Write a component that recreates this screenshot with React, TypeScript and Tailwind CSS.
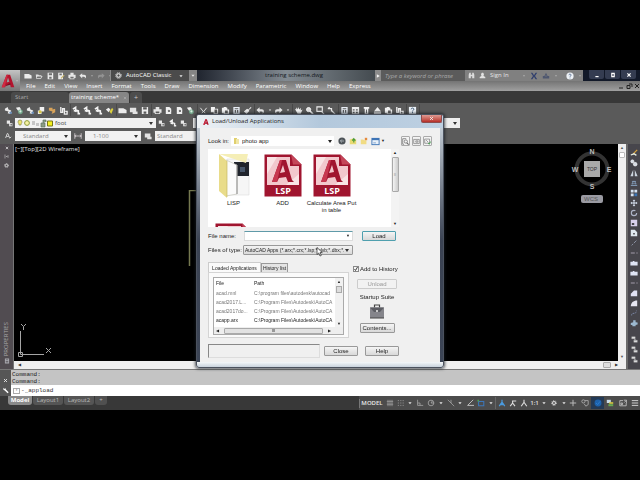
import { useState } from "react";
import type { ReactNode } from "react";
import clsx from "clsx";

const menus = [
  "File", "Edit", "View", "Insert", "Format", "Tools", "Draw",
  "Dimension", "Modify", "Parametric", "Window", "Help", "Express",
];

type Row = { file: string; path: string; active?: boolean };

const loadedApps: Row[] = [
  { file: "acad.mnl", path: "C:\\program files\\autodesk\\autocad" },
  { file: "acad2017.L...", path: "C:\\Program Files\\Autodesk\\AutoCA" },
  { file: "acad2017do...", path: "C:\\Program Files\\Autodesk\\AutoCA" },
  { file: "acapp.arx", path: "C:\\Program Files\\Autodesk\\AutoCA", active: true },
  { file: "", path: "C:\\Program Files\\Autodesk\\AutoCA", active: true },
];

// all glyphs are drawn on a 10x10 grid
const glyphs: Record<string, ReactNode> = {
  wide: <path d="M0.500 2.500h5.500l3.500 2V8h-9z" fill="#ececec" />,
  open: <path d="M1 3h3l1 1h3v1h1.500L7.500 8.500H1.500z M3 5.500l-1 2h5l1-2z" fill="#e0e0e0" fillRule="evenodd" />,
  save: <path d="M2 1h7v8H2z M3.500 1.500v2.500h4V1.500z M4 6v2.500h3V6z" fill="#ececec" fillRule="evenodd" />,
  saveAs: (
    <>
      <path d="M1.500 1h6v8h-6z M3 2v2h3V2z" fill="#ececec" fillRule="evenodd" />
      <path d="M5 8l4-4" stroke="#c8b56a" strokeWidth="1.500" />
    </>
  ),
  print: <path d="M3 1h4v2.500h2.500V7.500H8V9H2V7.500H0.500V3.500H3z M3 6v2h4V6z" fill="#e6e6e6" fillRule="evenodd" />,
  preview: (
    <>
      <path d="M2 1h4l2 2v6H2z" fill="#eee" />
      <circle cx="5.500" cy="5.500" r="2" fill="#777" stroke="#fff" />
    </>
  ),
  undo: <path d="M0.500 4.500L4 1.500v2h2.500c3 0 3 4 0.500 5 1-1.500 0.500-2.500-1-2.500H4v2z" fill="#e6e6e6" />,
  redo: <path d="M9.500 4.500L6 1.500v2H3.500c-3 0-3 4-0.500 5-1-1.500-0.500-2.500 1-2.500h2v2z" fill="#e6e6e6" />,
  caret: <path d="M3 4h4L5 6.500z" fill="#e8e8e8" />,
  play: <path d="M3 2v6l5-3z" fill="#f4f4f4" />,
  gear: (
    <g fill="none" stroke="#f0f0f0">
      <circle cx="5" cy="5" r="2.500" strokeWidth="1.500" />
      <circle cx="5" cy="5" r="4" strokeWidth="1.300" strokeDasharray="1.600 1.540" />
    </g>
  ),
  snapEnd: (
    <>
      <path d="M1 3l3-2 1 3 3 1-1 4-3-1 1-2-4-1z" fill="#ededed" />
      <circle cx="7.500" cy="7.500" r="1.500" fill="#6e8fb8" />
    </>
  ),
  snapGreen: (
    <>
      <path d="M1 2l4-1 2 3-3 2z" fill="#eee" />
      <circle cx="6" cy="6.500" r="2.700" fill="#74a78c" />
      <circle cx="6" cy="6" r="1.200" fill="#d9efe2" />
    </>
  ),
  snapYellow: (
    <>
      <path d="M3 1h5v5H5v3H1V5h2z" fill="#f0f0f0" />
      <circle cx="3.500" cy="6.500" r="1.800" fill="#d8c547" />
    </>
  ),
  orange: <path d="M1 2h4v2l3-1v4L4 9l1-3-4-1z" fill="#d8a35a" />,
  hooks: <path d="M2 1v6h2V3h2v6h3V6H7" stroke="#eee" strokeWidth="1.500" fill="none" />,
  chain: <path d="M1 3.500l3-2v3l3 1v3h2 M2 5l3 1" stroke="#f4f4f4" strokeWidth="1.800" fill="none" />,
  chainY: (
    <>
      <path d="M1 4l3-2 2 2-2 3z" fill="#f1f1f1" />
      <path d="M5 6l3-4 1 2-2 5z" fill="#ddd23d" />
    </>
  ),
  cut: <path d="M1.500 2L5 6.500 8.500 2 M3 8l2-2 2 2" stroke="#ececec" strokeWidth="1" fill="none" />,
  copy: <path d="M1 1h4.500v2H9v6H4V7H1z M5 4v4h3V4z" fill="#f2f2f2" fillRule="evenodd" />,
  paste: <path d="M1 2h2V1h3v1h1v2h2v5H3V8H1z M4.500 5v3h3V5z" fill="#f2f2f2" fillRule="evenodd" />,
  brush: <path d="M8.500 1L6 4 4.500 3 1 6l3 3 3-3.500-0.500-1L9.500 2z" fill="#ececec" />,
  hand: <path d="M2 5l-1-2 1.500 1V1.500L4 4l0.500-3L6 4l1.500-2v3l2-1-2 4.500H4z" fill="#f3f3f3" />,
  zoom: (
    <>
      <circle cx="4" cy="4" r="2.300" fill="#ddd" stroke="#fff" />
      <path d="M5.500 5.500L9 9" stroke="#fff" strokeWidth="1.700" />
    </>
  ),
  zoomWin: <path d="M1 1h6v5H1z M6 6l3 3" stroke="#f0f0f0" strokeWidth="1.200" fill="none" />,
  zoomPrev: <path d="M1 3h4v3 M1 3l2-1.500 M5 5l4 4" stroke="#e8e8e8" strokeWidth="1.400" fill="none" />,
  sheet: <path d="M1.500 1h7v8h-7z M3 2.500h4v1H3z M3 4.500h1.500v3H3z M5.500 4.500H7v3H5.500z" fill="#e8edf4" fillRule="evenodd" />,
  grid: <path d="M1 1h8v8H1z M2 3.500v1.500h2V3.500z M5.500 3.500V5h2V3.500z M2 6.500v1.500h2V6.500z M5.500 6.500v1.500h2V6.500z" fill="#ececec" fillRule="evenodd" />,
  tall: <path d="M2 1h6v2H7v6H3V3H2z M4.500 4v4h1V4z" fill="#f2f2f2" fillRule="evenodd" />,
  tri: <path d="M5 1l4 5H1z M1 7h8v2H1z" fill="#ececec" />,
  help: (
    <>
      <path d="M1 1h8v8H1z" fill="#eaf0f6" />
      <path d="M3.500 3.700c0-2 3.200-1.700 3 0C6.400 4.800 5 4.600 5 6 M5 6.800v1.200" stroke="#2f4966" fill="none" />
    </>
  ),
  layers: (
    <>
      <path d="M1 2h4v3h3v4H4V6H1z" fill="#e9e9e9" />
      <path d="M5.500 6h2v2h-2z" fill="#777" />
    </>
  ),
  dim: <path d="M1 1.500v7 M9 1.500v7 M1 5h8 M2.500 3.500L1 5l1.500 1.500 M7.500 3.500L9 5 7.500 6.500" stroke="#d8d0d4" fill="none" />,
  leader: <path d="M1 2h7v4h1.500v3H4V7H1z" fill="#e3e3e3" />,
  textA: <path d="M2 7.500L4 2h1l2 5.500 M3 5.500h3 M7 8l2-2" stroke="#e8e8e8" fill="none" />,
  cross: <path d="M2 2l6 6 M8 2L2 8" stroke="#eee" strokeWidth="1.700" fill="none" />,
  pin: <path d="M2 1v8 M4 5h2l2-2v4L6 5" stroke="#ddd" fill="none" />,
  wrench: <path d="M2 1v3l2 1 4 4 1.500-1.500-4-4L5 1.500 4 3z" fill="#fff" />,
  pencil: (
    <>
      <path d="M9 1L4 6" stroke="#d9a33b" strokeWidth="1.500" />
      <path d="M1 7.500l4-1.500 3 2" stroke="#e8efe2" strokeWidth="1.600" fill="none" />
    </>
  ),
  copies: (
    <g fill="#d6dce4" stroke="#fff" strokeWidth="0.700">
      <circle cx="3" cy="3" r="2" />
      <circle cx="6.500" cy="6.500" r="2.300" />
    </g>
  ),
  mirror: <path d="M4 1v8H0.500z M6 1v8h3.500z" fill="#ccd5df" />,
  offset: <path d="M1 8h8 M2 6h2c0-1-1-2-1-3h4c0 1-1 2-1 3h2" stroke="#8aa6c4" strokeWidth="1.200" fill="none" />,
  array: (
    <>
      <path d="M1 1h3.500v3.500H1z M5.500 1H9v3.500H5.500z M1 5.500h3.500V9H1z" fill="#d5e2f2" />
      <path d="M5.500 5.500H9V9H5.500z" fill="#3d75b5" />
    </>
  ),
  move: <path d="M5 0.500l1.700 2H5.600v1.900h1.900V3.300l2 1.700-2 1.700V5.600H5.600v1.900h1.100L5 9.500l-1.700-2h1.100V5.600H2.500v1.100L0.500 5l2-1.700v1.100h1.900V2.500H3.300z" fill="#dce6f5" />,
  rotate: <circle cx="5" cy="5" r="3.300" stroke="#aeb5c8" strokeWidth="1.400" strokeDasharray="17 4" fill="none" />,
  scale: <path d="M1 1h8v8H1z M2.300 5v2.500h3V5z" fill="#d9d1ec" fillRule="evenodd" />,
  stretch: <path d="M1 1h5l3 3v5H1z M4 5v2h2V5z" fill="#dfe8ef" fillRule="evenodd" />,
  slash: <path d="M2 8l2-2 M5 5l3-3" stroke="#8b92a4" strokeWidth="1.200" />,
  dash: <path d="M1 5h5 M8 5h1.500" stroke="#a6a0b0" strokeWidth="1.200" />,
  slab: <path d="M0.500 3.500h3V2.500h2v1h4V8h-9z" fill="#dfe4f4" />,
  chamfer: <path d="M1 9V6l4-4h4v7z" fill="#e0e1f3" />,
  fillet: <path d="M1 9c0-4 3-7 8-7v7z" fill="#e6e6f1" />,
  spline: <path d="M2 8c0-5 6 0 6-6" stroke="#7b89a8" strokeWidth="1.200" strokeDasharray="2 1" fill="none" />,
  explode: <path d="M1 5l3-1V1.500h3V4l2.500 0.500V7L7 7.500V9H3V7.500H1z" fill="#9cb9d0" />,
  stack: <path d="M1 1h5v3H1z M5 3.500v2h2 M4 6h5v3H4z" fill="#dedede" stroke="#aaa" strokeWidth="0.500" />,
  gridMode: <path d="M2.500 1v8 M5 1v8 M7.500 1v8 M1 3h8 M1 6.500h8" stroke="#9d9d9d" fill="none" />,
  dots: <path d="M1 2h8 M1 5h8 M1 8h8" stroke="#8b8b8b" strokeWidth="1.200" strokeDasharray="1.500 1.500" fill="none" />,
  ortho: <path d="M2 1v7h7 M2 5h3v3" stroke="#a5a5a5" fill="none" />,
  polar: (
    <g fill="none" stroke="#aaa">
      <circle cx="5" cy="5" r="3.500" />
      <path d="M5 5h4 M5 5l2-3" />
    </g>
  ),
  iso: <path d="M1 1l8 8 M5 1v4" stroke="#a5a5a5" fill="none" />,
  angle: <path d="M9 1L2 8h8" stroke="#c0c0c0" strokeWidth="1.200" fill="none" />,
  osnap: (
    <>
      <path d="M2 3h6.500v5.500H2z" stroke="#3c77bb" strokeWidth="1.300" fill="none" />
      <path d="M0.500 1h2v2h-2z" fill="#4aa14d" />
    </>
  ),
  annoBlue: <path d="M5 1v3L1.500 9 M5 4l3.500 5 M3 7h4" stroke="#4a9be0" strokeWidth="1.500" fill="none" />,
  anno: <path d="M5 1v3L1.500 9 M5 4l3.500 5" stroke="#dcdcdc" strokeWidth="1.400" fill="none" />,
  annoPlus: <path d="M4.500 2v3L1.500 9 M4.500 5l3 4 M5 2.500h4" stroke="#dcdcdc" strokeWidth="1.400" fill="none" />,
  plus: <path d="M5 1v8 M1 5h8" stroke="#bcbcbc" strokeWidth="1.200" />,
  shapes: (
    <g fill="none" stroke="#b4b4b4">
      <circle cx="3" cy="3" r="2" />
      <path d="M5 2h4v5L6 9 4 6" />
    </g>
  ),
  globe: (
    <>
      <circle cx="5" cy="5" r="4.300" fill="#1d62ac" />
      <path d="M2.500 5l2 2 3-4" stroke="#2f83d4" fill="none" />
    </>
  ),
  isolate: (
    <>
      <path d="M1 1h5v4H1z" fill="#c9dce9" />
      <path d="M4 4h5v2H4z" fill="#d7c940" />
      <path d="M3 6.500h6V9H3z" fill="#67a851" />
    </>
  ),
  clean: <path d="M9 5v3.500H1V2h4 M6 1.500h3.500V5 M9 2L6.500 4.500 M2.500 5h2v2h-2z" stroke="#ccc" fill="none" />,
  lines: <path d="M1 2h8 M1 5h8 M1 8h8" stroke="#d4d4d4" strokeWidth="1.200" />,
  bino: <path d="M1 9V4l1-3h2v3h2V1h2l1 3v5H6V6H4v3z" fill="#dcdcdc" />,
  user: <path d="M5 1c2.500 0 2.500 4 1 4.500L9 7v2H1V7l3-1.500C2.500 5 2.500 1 5 1z" fill="#e2e2e2" />,
  exchange: <path d="M1 1h2l2 3 2-3h2L6.300 5 9 9H7L5 6 3 9H1l2.700-4z" fill="#31406e" />,
  cloud: <path d="M5 1l2 4h2v3H1V5h2z M4.500 4v2h1V4z" fill="#4e576f" fillRule="evenodd" />,
  question: (
    <>
      <circle cx="5" cy="5" r="4.500" fill="#eef2f6" />
      <path d="M3.700 4c0-2 2.800-1.700 2.600 0C6.200 5 5 5 5 6 M5 7v1" stroke="#445c82" fill="none" />
    </>
  ),
  back: (
    <>
      <circle cx="5" cy="5" r="4.500" fill="#4d5358" />
      <path d="M7.500 5H3 M5 3L3 5l2 2" stroke="#b5bcc2" fill="none" />
    </>
  ),
  up: (
    <>
      <path d="M1 3l4-1 4 1v6H1z" fill="#e9da74" />
      <path d="M6 7V3 M4 4.500L6 2l2 2.500" stroke="#4a9a3a" strokeWidth="1.400" fill="none" />
    </>
  ),
  newFolder: (
    <>
      <path d="M1 3h3l1 1h3v5H1z" fill="#f1dc83" />
      <path d="M6 1h3v3H6z" fill="#e58a3e" />
    </>
  ),
  views: (
    <>
      <path d="M0.500 1h9v8h-9z" fill="#3d74b6" />
      <path d="M1.500 3.500h7v4.500h-7z" fill="#e9f1fa" />
      <path d="M2.500 6.500h3" stroke="#7aa0cc" />
    </>
  ),
  find: (
    <g fill="none" stroke="#666">
      <path d="M3 9H1V1h5" />
      <circle cx="5.500" cy="5" r="2.300" />
      <path d="M7 7l2.500 2.500" strokeWidth="1.500" />
    </g>
  ),
  locate: <path d="M1 2h8v6H1z M4 4h3v2H4z" stroke="#777" fill="none" />,
  favs: (
    <>
      <path d="M1 1.500h7v6H1z M3 3l3 3" stroke="#777" fill="none" />
      <path d="M6 7l1.500 2L9.500 5" stroke="#3c9a48" strokeWidth="1.200" fill="none" />
    </>
  ),
};

const Glyph: React.FC<{ name: string; className?: string }> = ({ name, className }) => (
  <svg viewBox="0 0 10 10" className={clsx("shrink-0", className ?? "h-2 w-2")} aria-hidden="true">
    {glyphs[name]}
  </svg>
);

const Tool: React.FC<{ name: string; className?: string; size?: string }> = ({
  name,
  className,
  size,
}) => (
  <button
    type="button"
    aria-label={name}
    className={clsx("flex shrink-0 items-center justify-center", className ?? "h-3 w-[11px]")}
  >
    <Glyph name={name} className={size} />
  </button>
);

const Combo: React.FC<{ label: string; value: string; className: string; textClass?: string }> = ({
  label,
  value,
  className,
  textClass,
}) => (
  <div className={clsx("relative shrink-0", className)}>
    <select
      aria-label={label}
      className={clsx("block h-full w-full appearance-none truncate outline-none", textClass)}
    >
      <option>{value}</option>
    </select>
    <svg viewBox="0 0 4 3" className="pointer-events-none absolute top-1/2 right-[3px] -mt-px h-[3px] w-1">
      <path d="M0 0h4L2 3z" fill="#333" />
    </svg>
  </div>
);

const AutoLogo: React.FC<{ className: string }> = ({ className }) => (
  <svg viewBox="0 0 20 20" className={className} aria-hidden="true">
    <path d="M1 19L8 1h5l6 18h-5l-1-4-6 1-1 3z M8 12l4-1-2-6z" fill="#b3142d" fillRule="evenodd" />
    <path d="M1 19L8 1h2L5 19z" fill="#d02b42" />
    <path d="M7 16l6-3 1 2-7 2z" fill="#7d0d20" />
  </svg>
);

const TitleBar = () => (
  <header className="flex h-[21px] bg-[#4a4a4a]">
    <button
      type="button"
      aria-label="Application menu"
      className="flex w-5 shrink-0 items-center justify-center bg-linear-to-b from-[#c4c4c4] to-[#777]"
    >
      <AutoLogo className="h-[14px] w-[14px]" />
      <Glyph name="caret" className="h-1 w-1" />
    </button>
    <div className="flex min-w-0 flex-1 flex-col">
      <div className="flex h-[11px] items-center bg-[#3c434b]">
        <div className="flex h-full w-[90px] shrink-0 items-center gap-[3px] bg-[#707070] pl-1">
          {["wide", "open", "save", "saveAs", "print", "undo"].map((name) => (
            <Tool key={name} name={name} className="h-2 w-2" />
          ))}
          <Glyph name="caret" className="h-1 w-1" />
          <Glyph name="redo" className="h-2 w-2 opacity-30" />
          <Glyph name="caret" className="h-1 w-1" />
        </div>
        <div className="flex h-full w-[87px] shrink-0 items-center gap-1 border-l border-[#8b8b8b] bg-[#4b4b4b] pl-1">
          <Glyph name="gear" className="h-[7px] w-[7px]" />
          <span className="flex-1 text-white">AutoCAD Classic</span>
          <Glyph name="caret" className="h-2 w-2" />
          <Glyph name="caret" className="h-full w-2 bg-[#858585]" />
        </div>
        <div className="flex h-full flex-1 items-center justify-center bg-linear-to-r from-[#20252f] via-[#838b92] to-[#444b50] pl-4 text-[#14181d]">
          <span className="whitespace-nowrap">training scheme.dwg</span>
        </div>
        <Tool name="play" className="h-full w-[6px] bg-[#8b8b8b]" size="h-[6px] w-[6px]" />
        <input
          aria-label="Search"
          placeholder="Type a keyword or phrase"
          className="h-full w-[84px] shrink-0 bg-[#5b5b5b] px-1 italic outline-none placeholder:text-[#aaa]"
        />
        <div className="flex h-full w-[118px] shrink-0 items-center gap-1 bg-[#808080] pl-[3px] text-[#e6e6e6]">
          <Glyph name="bino" className="h-[7px] w-[7px]" />
          <Glyph name="user" className="h-[7px] w-[7px]" />
          <button type="button" className="mr-auto whitespace-nowrap">Sign In</button>
          <Glyph name="caret" className="h-1 w-1" />
          <Tool name="exchange" className="h-2 w-2" />
          <Tool name="cloud" className="h-2 w-2" />
          <Glyph name="caret" className="mr-1 h-1 w-1" />
          <Tool name="question" className="h-2 w-2" />
          <Glyph name="caret" className="mr-px h-1 w-1" />
        </div>
        <div className="flex h-full w-[57px] shrink-0 items-start justify-end gap-px bg-[#121929] pr-1">
          {["M3 7h4", "M3.500 3h3v4h-3z", "M3 3l4 4 M7 3L3 7"].map((d) => (
            <button
              key={d}
              type="button"
              aria-label="Window control"
              className="flex h-[9px] w-[15px] items-center justify-center rounded-b-[2px] bg-[#343c51]"
            >
              <svg viewBox="0 0 10 10" className="h-2 w-2">
                <path d={d} stroke="#fff" strokeWidth="1.500" fill="none" />
              </svg>
            </button>
          ))}
        </div>
      </div>
      <nav className="flex h-[10px] items-center gap-[9px] bg-linear-to-b from-[#747474] to-[#a0a0a0] pl-[6px] text-white">
        {menus.map((name) => (
          <button key={name} type="button">{name}</button>
        ))}
        <svg viewBox="0 0 20 6" className="mr-px ml-auto h-[6px] w-5" aria-hidden="true">
          <path d="M0 5h4 M8 2.500h3v3H8z M10 1h3v3 M16 1l4 4 M20 1l-4 4" stroke="#222" fill="none" />
        </svg>
      </nav>
    </div>
  </header>
);

const FileTabs = () => (
  <div className="flex h-3 items-end bg-[#383838] pl-[11px]">
    <button type="button" className="h-[11px] w-[58px] rounded-t-[3px] bg-[#4a4a4a] pl-1 text-left text-[#a9a9a9]">
      Start
    </button>
    <button
      type="button"
      className="flex h-[11px] w-[60px] items-center justify-between rounded-t-[3px] bg-[#858585] px-[2px] whitespace-nowrap text-white"
    >
      training scheme*
      <Glyph name="cross" className="h-1 w-1 opacity-40" />
    </button>
    <button type="button" className="ml-px h-[11px] w-3 rounded-t-[3px] bg-[#4d4d4d] text-[7px] text-[#ccc]">
      +
    </button>
  </div>
);

const standardTools = [
  ["snapEnd", "snapGreen", "snapEnd", "snapYellow", "orange", "hooks"],
  ["chain", "chain", "chain", "chainY"],
  ["wide", "leader", "save"],
  ["print", "preview", "preview", "snapGreen"],
  ["cut", "copy", "paste", "sheet", "brush"],
  ["undo", "caret", "redo", "caret"],
  ["hand", "zoom", "zoomWin", "zoomPrev"],
  ["sheet", "grid", "tall", "tri", "paste", "hooks"],
  ["help"],
];

const Toolbars = () => (
  <div className="bg-[#5a5a5a]">
    <div className="flex h-[14px] items-center pl-[3px]">
      {standardTools.map((group, i) => (
        <div key={i} className="flex border-r border-[#484848] pr-px">
          {group.map((name, j) => (
            <Tool
              key={j}
              name={name}
              className={name === "caret" ? "h-3 w-[7px]" : "h-3 w-[11px]"}
              size={name === "caret" ? "h-[6px] w-[6px]" : "h-[9px] w-[9px]"}
            />
          ))}
        </div>
      ))}
    </div>
    <div className="flex h-3 items-center pl-1">
      <Tool name="layers" />
      <div className="flex h-[10px] w-[141px] shrink-0 items-center gap-px bg-[#f1f1f1] pl-[2px]">
        <svg viewBox="0 0 36 9" className="h-[9px] w-9 shrink-0" aria-hidden="true">
          <path d="M1 3a2 2 0 1 1 4 0c0 1-1 1-1 3H2c0-2-1-2-1-3z" fill="#ece36b" stroke="#777a3c" strokeWidth="0.600" />
          <circle cx="10" cy="4" r="2.400" fill="#f6f1a4" stroke="#8d9b3c" />
          <path d="M15 2h3v4h-3z M19 4h3v3h-3z" fill="#c5c5c5" />
          <path d="M24 4h4v4h-4z M26 4V1h3v2" fill="#8b9c84" stroke="#5b7460" strokeWidth="0.700" />
          <path d="M30.500 2h5v5h-5z" fill="#f3ef1e" stroke="#777717" />
        </svg>
        <Combo label="Layer" value="foot" className="h-[10px] flex-1" textClass="pl-px text-[#444]" />
      </div>
      <Tool name="layers" />
      <Tool name="chain" />
      <Tool name="layers" />
      <div className="ml-1 w-[267px]">
        <Combo label="Properties" value="" className="h-[10px] bg-[#eee]" />
      </div>
    </div>
    <div className="flex h-[14px] items-center gap-[3px] pl-1">
      <Tool name="textA" className="h-3 w-2" />
      <Combo label="Text style" value="Standard" className="h-[10px] w-14 bg-[#f1f1f1]" textClass="pl-2 text-[#888]" />
      <Tool name="dim" className="h-3 w-2" />
      <Combo label="Dimension style" value="1-100" className="h-[10px] w-14 bg-[#f1f1f1]" textClass="pl-2 text-[#888]" />
      <Tool name="leader" className="h-3 w-2" />
      <Combo label="Table style" value="Standard" className="h-[10px] w-14 bg-[#f1f1f1]" textClass="pl-[2px] text-[#888]" />
    </div>
  </div>
);

const Compass = () => (
  <svg viewBox="0 0 42 56" className="absolute top-1 right-[5px] h-14 w-[42px]" fontFamily="Liberation Sans, sans-serif">
    <circle cx="21" cy="21" r="15.500" fill="none" stroke="#333" strokeWidth="4" />
    <path d="M13 13h16v16H13z" fill="#a9a9a9" />
    <g fill="#bdbdbd" fontSize="7" fontWeight="bold" textAnchor="middle">
      <text x="21" y="6">N</text>
      <text x="4" y="24">W</text>
      <text x="38" y="24">E</text>
      <text x="21" y="41">S</text>
    </g>
    <text x="21" y="23" fill="#333" fontSize="5" textAnchor="middle">TOP</text>
    <rect x="10" y="47" width="22" height="8" rx="2" fill="#9a9aa2" />
    <text x="13" y="53" fill="#555" fontSize="6">WCS</text>
  </svg>
);

const modifyTools = [
  "pencil", "copies", "mirror", "offset", "array", "move", "rotate", "scale",
  "stretch", "slash", "dash", "slab", "slab", "dash", "chamfer", "fillet", "spline", "explode",
];

const Workspace = () => (
  <main className="flex flex-1 bg-[#5a5a5a] pt-px">
    <aside className="flex w-[14px] shrink-0 flex-col items-center border-r border-[#777] bg-[#514c51]">
      <Tool name="cross" className="h-[7px] w-2" size="h-1 w-1" />
      <Tool name="pin" className="h-[10px] w-2" size="h-[5px] w-[5px]" />
      <Tool name="gear" className="h-2 w-2" size="h-[5px] w-[5px]" />
      <span className="mt-auto rotate-180 text-[6px] text-[#a9a9a9] [writing-mode:vertical-rl]">
        PROPERTIES
      </span>
      <Tool name="sheet" className="mt-px mb-1 h-2 w-2" size="h-[6px] w-[6px] opacity-60" />
    </aside>
    <div className="flex min-w-0 flex-1 flex-col">
      <div className="flex flex-1">
        <div className="relative flex-1 bg-black">
          <p className="pt-px pl-px text-[6px] text-[#e0e0e0]">[−][Top][2D Wireframe]</p>
          <svg viewBox="0 0 10 78" className="absolute top-[46px] left-[174px] h-[78px] w-[10px]">
            <path d="M9 0.500H1.500V76" stroke="#75784f" strokeWidth="1.500" fill="none" />
          </svg>
          <svg viewBox="0 0 36 36" className="absolute bottom-[2px] left-1 h-9 w-9">
            <path
              d="M2.500 8v23.500H26 M0.500 29.500h4v4h-4z M3 1l2.500 2.500L8 1 M5.500 3.500V7 M28 25l5 5 M33 25l-5 5"
              stroke="#a5a5a5"
              fill="none"
            />
          </svg>
          <Compass />
        </div>
        <div className="flex w-2 shrink-0 flex-col items-center bg-[#efefef] text-[4px] leading-none text-[#555]">
          <span className="my-[2px]">▲</span>
          <span className="h-[6px] w-[6px] rounded-[1px] border border-[#bbb] bg-white" />
          <span className="mt-auto mb-[2px]">▼</span>
        </div>
      </div>
      <div className="flex h-2 items-center justify-between bg-[#efefef] px-1 text-[4px] leading-none text-[#333]">
        <span>◀</span>
        <span className="flex items-center gap-1 pr-1">
          <span className="h-[6px] w-2 rounded-[1px] border border-[#aaa] bg-[#ddd]" />▶
        </span>
      </div>
    </div>
    <aside className="flex w-[14px] shrink-0 flex-col items-center border-l-2 border-[#6b6b6b] bg-[#47464c] pt-1">
      {modifyTools.map((name, i) => (
        <Tool key={i} name={name} className="h-[10px] w-3" />
      ))}
      <div className="mt-[6px] flex flex-col items-center">
        <Tool name="stack" className="h-[10px] w-3" size="h-[7px] w-[7px]" />
        <Tool name="stack" className="h-[10px] w-3" size="h-[7px] w-[7px]" />
        <Tool name="stack" className="h-[10px] w-3" size="h-[7px] w-[7px]" />
      </div>
    </aside>
  </main>
);

const CommandLine = () => {
  const [command, setCommand] = useState("_appload");

  return (
    <div className="flex h-[27px] border-t border-[#777] bg-[#c4c4c4] font-['Liberation_Mono',monospace] text-[6px]">
      <div className="flex w-[11px] shrink-0 flex-col items-center justify-end gap-1 bg-[#565656] pb-[2px]">
        <Glyph name="cross" className="h-[5px] w-[5px]" />
        <Glyph name="wrench" className="h-[7px] w-[7px]" />
      </div>
      <div className="flex flex-1 flex-col">
        <div className="flex-1 pt-px pl-px leading-[7px] text-[#222]">
          <p>Command:</p>
          <p>Command:</p>
        </div>
        <label className="flex h-[11px] items-center bg-white pl-[2px] text-[#333]">
          <span className="flex h-[6px] w-[7px] items-center justify-center border border-[#aaa] text-[5px] leading-none text-[#777]">
            ›
          </span>
          <span className="pl-px">-</span>
          <input
            aria-label="Command"
            value={command}
            onChange={(e) => setCommand(e.currentTarget.value)}
            className="flex-1 outline-none"
          />
        </label>
      </div>
    </div>
  );
};

const StatusBar = () => (
  <footer className="flex h-[14px] bg-[#383838] text-[#bbb]">
    <div className="flex items-start gap-px pl-2">
      <button type="button" className="h-[9px] w-6 rounded-b-[3px] bg-[#8a8a8a] font-bold text-white">Model</button>
      <button type="button" className="h-[9px] w-[30px] rounded-b-[3px] bg-[#555]">Layout1</button>
      <button type="button" className="h-[9px] w-[30px] rounded-b-[3px] bg-[#555]">Layout2</button>
      <button type="button" className="h-[9px] w-3 rounded-b-[3px] bg-[#505050]">+</button>
    </div>
    <div className="ml-auto flex items-center bg-[#4c4c4c]">
      <button type="button" className="w-[25px] border-l border-[#777] font-semibold text-[#e8e8e8]">MODEL</button>
      <Tool name="gridMode" />
      <Tool name="dots" />
      <Tool name="caret" className="h-3 w-2" />
      <Tool name="ortho" />
      <Tool name="polar" className="h-3 w-3" />
      <Tool name="caret" className="h-3 w-2" />
      <Tool name="iso" />
      <Tool name="caret" className="h-3 w-2" />
      <Tool name="angle" />
      <Tool name="osnap" className="h-3 w-3" />
      <Tool name="caret" className="h-3 w-2" />
      <Tool name="annoBlue" className="h-3 w-3 border-l border-[#666]" />
      <Tool name="annoPlus" />
      <Tool name="anno" />
      <button type="button" className="w-[11px] font-semibold text-[#e0e0e0]">1:1</button>
      <Tool name="caret" className="h-3 w-2" />
      <Tool name="gear" className="h-3 w-3" size="h-[6px] w-[6px]" />
      <Tool name="caret" className="h-3 w-[7px]" />
      <Tool name="plus" />
      <Tool name="shapes" className="h-3 w-[13px]" />
      <Tool name="globe" className="h-3 w-[13px] bg-[#243a55]" />
      <Tool name="isolate" className="h-3 w-3" />
      <Tool name="clean" className="h-3 w-[13px]" />
      <Tool name="lines" />
    </div>
  </footer>
);

const LspIcon = () => (
  <svg viewBox="0 0 38 43" className="h-[43px] w-[38px]" fontFamily="Open Sans, sans-serif">
    <path d="M0.500 0.500h27l10 10v32h-37z" fill="#a0152f" />
    <path d="M3 3h23v9h9v19H3z" fill="#f2c8cd" />
    <path d="M3 3h10L3 20z M35 20v11H22z" fill="#f9e4e5" />
    <path d="M27 0.500l10.500 10H29z" fill="#c44659" />
    <path d="M8 28L16 6h6l6 20 2 2h-6l-2-5-7 1-2 4z M16 19l5-1-2-7z" fill="#a0152f" fillRule="evenodd" />
    <path d="M8 28L16 6h2l-5 22z" fill="#c73850" />
    <text x="19" y="40" fill="#fff" fontSize="9" fontWeight="bold" textAnchor="middle">LSP</text>
  </svg>
);

const FolderIcon = () => (
  <svg viewBox="0 0 32 44" className="h-11 w-8">
    <path d="M9 5h22v36H9z" fill="#f6f6f6" stroke="#d5d5d5" strokeWidth="0.500" />
    <path d="M16 8h15v14H16z" fill="#20242c" />
    <path d="M22 13h5v5h-5z" fill="#47566a" />
    <path d="M1 0h29l-2 9-15-5z" fill="#f5eeb6" />
    <path d="M8 6l11 5v29L8 42z" fill="#fbfbfb" stroke="#bdbdb4" strokeWidth="0.600" />
    <path d="M1 0l8 7v37L1 37z" fill="#e9dc8a" />
    <path d="M19 11v29" stroke="#8d8d8d" />
    <path d="M9 7v36" stroke="#c7b965" strokeWidth="0.700" />
  </svg>
);

const DialogButton: React.FC<{ children: ReactNode; className?: string; disabled?: boolean }> = ({
  children,
  className,
  disabled,
}) => (
  <button
    type="button"
    disabled={disabled}
    className={clsx(
      "h-[10px] shrink-0 rounded-[1px] border leading-[8px]",
      disabled ? "border-[#ccc] bg-[#f2f2f2] text-[#999]" : "bg-linear-to-b from-[#f5f5f5] to-[#d8d8d8]",
      className,
    )}
  >
    {children}
  </button>
);

const LoadDialog = () => {
  const [fileName, setFileName] = useState("");
  const [addToHistory, setAddToHistory] = useState(true);

  return (
    <section
      role="dialog"
      aria-label="Load/Unload Applications"
      className="absolute top-[114px] left-1/2 w-[248px] -translate-x-1/2 rounded-[3px] border border-[#4b525e] bg-linear-to-b from-[#d4dde5] via-[#3b4353] to-[#3c4556] font-['Liberation_Sans',sans-serif] text-[6px] text-[#222] shadow-[0_0_3px_1px_rgba(20,24,32,0.7)]"
    >
      <div className="flex h-[13px] items-center gap-[3px] rounded-t-[2px] bg-linear-to-r from-[#eef2f5] via-[#b3c8dc] to-[#bdd0e2] pl-[6px] font-['Open_Sans',sans-serif]">
        <AutoLogo className="h-[6px] w-[6px]" />
        <h1 className="flex-1">Load/Unload Applications</h1>
        <button
          type="button"
          aria-label="Close window"
          className="mr-px flex h-2 w-[21px] items-center justify-center self-start rounded-b-[2px] border border-t-0 border-[#8c4d4d] bg-linear-to-b from-[#dd9a94] to-[#b62a26]"
        >
          <Glyph name="cross" className="h-[5px] w-[5px]" />
        </button>
      </div>
      <div className="mx-[3px] bg-[#f0f0f0] pt-2 pr-2 pb-1 pl-2">
        <div className="flex h-[10px] items-center">
          <label htmlFor="look-in" className="w-[23px]">Look in:</label>
          <div className="flex h-[10px] w-[103px] items-center bg-white pl-[2px]">
            <svg viewBox="0 0 7 8" className="h-2 w-[7px] shrink-0">
              <path d="M1 1h3v6H1z" fill="#e0cf6e" />
              <path d="M3 2h3v5H3z" fill="#f1e7a8" />
            </svg>
            <div className="relative flex-1">
              <select id="look-in" className="block h-2 w-full appearance-none pl-[2px] outline-none">
                <option>photo app</option>
              </select>
              <svg viewBox="0 0 4 3" className="pointer-events-none absolute top-[3px] right-[2px] h-[3px] w-1">
                <path d="M0 0h4L2 3z" fill="#222" />
              </svg>
            </div>
          </div>
          <div className="ml-[2px] flex">
            <Tool name="back" />
            <Tool name="up" />
            <Tool name="newFolder" />
            <Tool name="views" className="h-3 w-[12px]" size="h-[9px] w-[9px]" />
            <span className="text-[4px] leading-[12px]">▼</span>
          </div>
          <div className="ml-auto flex gap-[2px]">
            {["find", "locate", "favs"].map((name) => (
              <Tool
                key={name}
                name={name}
                className="h-[10px] w-[9px] rounded-[1px] border border-[#aaa] bg-[#f4f4f4]"
                size="h-[7px] w-[7px]"
              />
            ))}
          </div>
        </div>

        <div className="mt-[3px] flex h-[78px] w-[191px] bg-white">
          <ul className="grid flex-1 grid-cols-[repeat(3,49px)] content-start gap-y-[7px] overflow-hidden pt-[5px] pl-px text-center leading-[7px]">
            <li className="flex h-[62px] flex-col items-center gap-[2px]"><FolderIcon />LISP</li>
            <li className="flex h-[62px] flex-col items-center gap-[3px]"><LspIcon />ADD</li>
            <li className="flex h-[62px] flex-col items-center gap-[3px]">
              <LspIcon />
              <span className="whitespace-nowrap">Calculate Area Put<br />in table</span>
            </li>
            <li className="flex justify-center"><LspIcon /></li>
          </ul>
          <div className="flex w-2 flex-col items-center bg-[#f3f3f3] text-[4px] leading-none">
            <span className="my-[2px]">▲</span>
            <span className="flex h-[35px] w-[7px] items-center justify-center rounded-[1px] border border-[#a9a9a9] bg-linear-to-r from-[#f4f4f4] to-[#ccc] text-[#666]">
              ≡
            </span>
            <span className="mt-auto mb-px">▼</span>
          </div>
        </div>

        <div className="mt-1 flex h-[10px] items-center">
          <label htmlFor="file-name" className="w-9">File name:</label>
          <div className="flex h-[10px] w-[109px] items-center border border-[#dcdcdc] border-t-[#5f9aa8] bg-white">
            <input
              id="file-name"
              autoFocus
              value={fileName}
              onChange={(e) => setFileName(e.currentTarget.value)}
              className="h-2 min-w-0 flex-1 px-px outline-none"
            />
            <span className="pr-[2px] text-[4px] leading-none">▼</span>
          </div>
          <DialogButton className="ml-[9px] w-[34px] border-[#4f9fae]">Load</DialogButton>
        </div>
        <div className="mt-1 flex h-[10px] items-center">
          <span className="w-[35px]">Files of type:</span>
          <Combo
            label="Files of type"
            value="AutoCAD Apps (*.arx;*.crx;*.lsp;*.dvb;*.dbx;*."
            className="h-[10px] w-[110px] rounded-[1px] border border-[#999] bg-linear-to-b from-[#f3f3f3] to-[#d9d9d9] text-[5px]"
            textClass="pr-[7px] pl-px"
          />
        </div>

        <div className="mt-[7px] flex">
          <div className="w-[141px] text-[5px]">
            <div role="tablist" className="flex h-[10px] items-end">
              <button
                role="tab"
                type="button"
                aria-selected="true"
                className="h-[10px] w-[53px] whitespace-nowrap border border-b-0 border-[#ccc] bg-[#fafafa] leading-[8px]"
              >
                Loaded Applications
              </button>
              <button
                role="tab"
                type="button"
                aria-selected="false"
                className="h-[9px] w-[27px] whitespace-nowrap border border-b-0 border-[#999] bg-[#e4e4e4] leading-[8px]"
              >
                History list
              </button>
            </div>
            <div className="h-[66px] border border-[#d4d4d4] bg-[#fafafa] px-[4px] pt-1 pb-[2px]">
              <div className="flex h-full flex-col border border-[#aaa] bg-white">
                <div className="flex min-h-0 flex-1">
                  <div className="min-w-0 flex-1 overflow-hidden">
                    <table className="w-full table-fixed text-left">
                      <thead>
                        <tr className="leading-[11px]">
                          <th className="w-10 pl-[2px] font-normal">File</th>
                          <th className="font-normal">Path</th>
                        </tr>
                      </thead>
                      <tbody>
                        {loadedApps.map((row, i) => (
                          <tr key={i} className={clsx("leading-[9px]", !row.active && "text-[#777]")}>
                            <td className="pl-[2px] whitespace-nowrap">{row.file}</td>
                            <td className="whitespace-nowrap">{row.path}</td>
                          </tr>
                        ))}
                      </tbody>
                    </table>
                  </div>
                  <div className="flex w-2 flex-col items-center bg-[#f1f1f1] text-[4px] leading-none">
                    <span className="my-[2px]">▲</span>
                    <span className="h-[7px] w-[6px] border border-[#aaa] bg-[#ddd]" />
                    <span className="mt-auto mb-px">▼</span>
                  </div>
                </div>
                <div className="flex h-[7px] items-center justify-between bg-[#eee] pr-3 pl-[2px] text-[4px] leading-none">
                  <span>◀</span>
                  <span className="flex h-[6px] w-[99px] items-center justify-center rounded-[1px] border border-[#aaa] bg-[#e2e2e2]">
                    III
                  </span>
                  <span>▶</span>
                </div>
              </div>
            </div>
          </div>
          <div className="ml-1 flex flex-1 flex-col items-center pr-[31px] pt-[3px]">
            <label className="relative flex items-center gap-px self-start whitespace-nowrap leading-[8px]">
              <input
                type="checkbox"
                checked={addToHistory}
                onChange={(e) => setAddToHistory(e.currentTarget.checked)}
                className="peer h-[6px] w-[6px] appearance-none border border-[#888] bg-[#f6f6f6]"
              />
              <svg
                viewBox="0 0 6 6"
                className="pointer-events-none absolute top-px left-0 hidden h-[6px] w-[6px] peer-checked:block"
              >
                <path d="M1.500 3l1 1.500 2-3.500" stroke="#333" strokeWidth="0.900" fill="none" />
              </svg>
              Add to History
            </label>
            <DialogButton disabled className="mt-[6px] w-10">Unload</DialogButton>
            <p className="mt-1 leading-[8px]">Startup Suite</p>
            <svg viewBox="0 0 16 15" className="mt-[3px] h-[15px] w-4" aria-hidden="true">
              <path d="M5.500 3.500V1h5v2.500" stroke="#444" strokeWidth="1.200" fill="none" />
              <path d="M1 3.500h14V14H1z" fill="#85858b" />
              <path d="M1 3.500h14l-4 4.500H5z" fill="#5c5d63" />
              <path d="M7 6h2v2H7z" fill="#c8c8c8" />
              <path d="M1 14h14" stroke="#444" />
            </svg>
            <DialogButton className="mt-1 w-[35px] border-[#999]">Contents...</DialogButton>
          </div>
        </div>

        <div className="mt-[6px] flex h-[14px] items-center">
          <div className="h-full w-[112px] border border-[#ddd] border-t-[#888] border-l-[#888]" />
          <DialogButton className="ml-1 w-[34px] border-[#999]">Close</DialogButton>
          <DialogButton className="ml-[7px] w-[34px] border-[#999]">Help</DialogButton>
        </div>
      </div>
      <div className="h-[5px] rounded-b-[2px] bg-linear-to-b from-[#f4f7f9] to-[#c8d2dc]" />
      <svg viewBox="0 0 8 10" className="pointer-events-none absolute top-[132px] left-[119px] h-[10px] w-2">
        <path d="M1 0.500v7l1.700-1.500L4 9l1.300-0.600L4 5.600h2.300z" fill="#fff" stroke="#222" strokeWidth="0.700" />
      </svg>
    </section>
  );
};

export default function App() {
  return (
    <div className="relative flex min-h-screen flex-col overflow-hidden bg-black py-[70px] font-['Open_Sans',sans-serif] text-[6px] leading-[9px]">
      <TitleBar />
      <FileTabs />
      <Toolbars />
      <Workspace />
      <CommandLine />
      <StatusBar />
      <LoadDialog />
    </div>
  );
}
